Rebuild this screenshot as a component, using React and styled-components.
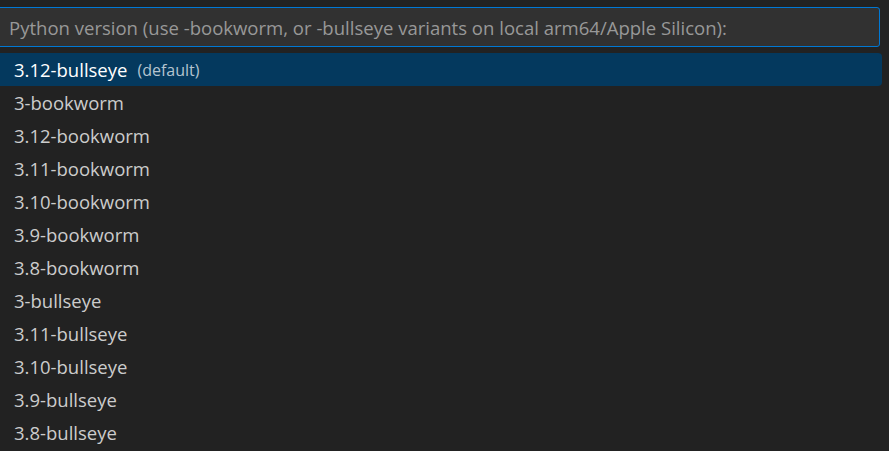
import React from "react";
import styled, { createGlobalStyle } from "styled-components";

const Global = createGlobalStyle`
  html, body { margin: 0; padding: 0; background: #222222; }
  body { font-family: "Open Sans", "Noto Sans", sans-serif; overflow: hidden; }
`;

const Panel = styled.div`
  width: 889px;
  height: 451px;
  background: #222222;
  display: flex;
  flex-direction: column;
  overflow: hidden;
`;

const InputBox = styled.div`
  margin: 7px 9px 0 -6px;
  height: 38px;
  background: #313131;
  border: 1px solid #0078d4;
  border-radius: 3px;
  display: flex;
  align-items: center;
  padding-left: 14px;
  color: #989898;
  font-size: 18.55px;
  white-space: nowrap;
`;

const List = styled.div`
  margin: 6px 7px 0 -6px;
  display: flex;
  flex-direction: column;
`;

const Row = styled.div`
  height: 33px;
  flex: none;
  display: flex;
  align-items: center;
  padding-left: 20px;
  border-radius: 4px;
  background: ${(p) => (p.$selected ? "#04395e" : "transparent")};
  color: ${(p) => (p.$selected ? "#ffffff" : "#cccccc")};
  font-size: 18.5px;
  white-space: nowrap;
`;

const Desc = styled.span`
  margin-left: 10px;
  font-size: 16px;
  color: #b4c4d0;
`;

const items = [
  "3.12-bullseye",
  "3-bookworm",
  "3.12-bookworm",
  "3.11-bookworm",
  "3.10-bookworm",
  "3.9-bookworm",
  "3.8-bookworm",
  "3-bullseye",
  "3.11-bullseye",
  "3.10-bullseye",
  "3.9-bullseye",
  "3.8-bullseye",
];

export default function App() {
  return (
    <Panel>
      <Global />
      <InputBox>
        Python version (use -bookworm, or -bullseye variants on local arm64/Apple Silicon):
      </InputBox>
      <List>
        {items.map((it, i) => (
          <Row key={it} $selected={i === 0}>
            {it}
            {i === 0 && <Desc>(default)</Desc>}
          </Row>
        ))}
      </List>
    </Panel>
  );
}
